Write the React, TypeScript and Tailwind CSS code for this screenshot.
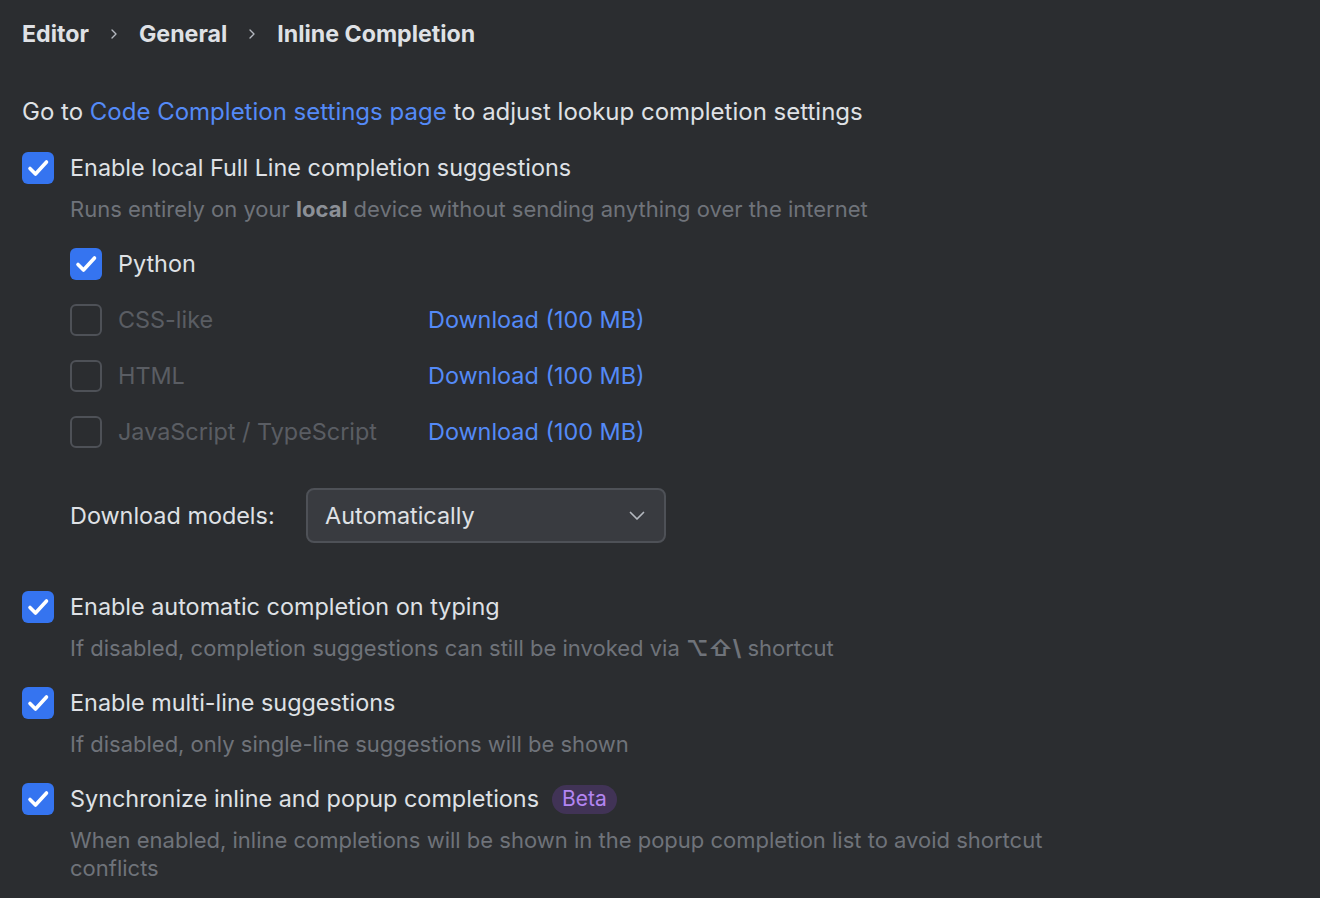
import { ChevronRight } from "lucide-react";

function Check({ on = true }: { on?: boolean }) {
  if (!on) {
    return (
      <div className="w-8 h-8 shrink-0 rounded-[6px] border-2 border-[#4e5157] bg-[#2b2d30]" />
    );
  }
  return (
    <div className="w-8 h-8 shrink-0 rounded-[6px] bg-[#3574f0]">
      <svg width="32" height="32" viewBox="0 0 32 32" fill="none">
        <path d="M8 16.5 L13.5 22 L24.5 10" stroke="white" strokeWidth="3.6" strokeLinecap="round" strokeLinejoin="round" />
      </svg>
    </div>
  );
}

function Option({
  label,
  desc,
  badge,
}: {
  label: string;
  desc: React.ReactNode;
  badge?: string;
}) {
  return (
    <div>
      <div className="flex items-center gap-4 h-8">
        <Check />
        <span className="text-[#dfe1e5]">{label}</span>
        {badge && (
          <span className="-ml-[3px] rounded-full bg-[#413356] text-[#b385f2] px-[10px] h-[29px] flex items-center text-[21px]">
            {badge}
          </span>
        )}
      </div>
      <div className="pl-12 mt-[11px] text-[22px] text-[#6f737a] leading-[28px] max-w-[1050px]">{desc}</div>
    </div>
  );
}

const LANGS = ["CSS-like", "HTML", "JavaScript / TypeScript"];

export default function App() {
  return (
    <div
      className="min-h-[898px] bg-[#2b2d30] text-[23.4px] text-[#dfe1e5] px-[22px] pt-[18px]"
      style={{ fontFamily: "Inter, 'Noto Sans', sans-serif" }}
    >
      {/* breadcrumb */}
      <div className="flex items-center h-8 font-bold text-[23.2px] text-[#dfe1e5]">
        <span>Editor</span>
        <ChevronRight className="mx-[17px] text-[#b4b8bf]" size={16} strokeWidth={2} />
        <span>General</span>
        <ChevronRight className="mx-[17px] text-[#b4b8bf]" size={16} strokeWidth={2} />
        <span>Inline Completion</span>
      </div>

      <div className="mt-[46px] leading-8 text-[24px]">
        Go to <span className="text-[#548af7]">Code Completion settings page</span> to adjust lookup
        completion settings
      </div>

      <div className="mt-6">
        <div className="flex items-center gap-4 h-8">
          <Check />
          <span>Enable local Full Line completion suggestions</span>
        </div>
        <div className="pl-12 mt-[11px] text-[22px] text-[#6f737a] leading-[28px]">
          Runs entirely on your <span className="font-bold text-[#8c9097]">local</span> device without
          sending anything over the internet
        </div>

        <div className="pl-12 mt-[25px] flex flex-col gap-6">
          <div className="flex items-center gap-4 h-8">
            <Check />
            <span>Python</span>
          </div>
          {LANGS.map((l) => (
            <div key={l} className="flex items-center h-8">
              <Check on={false} />
              <span className="ml-4 w-[310px] text-[#5a5d63]">{l}</span>
              <span className="text-[#548af7]">Download (100 MB)</span>
            </div>
          ))}
        </div>

        <div className="pl-12 mt-[40px] flex items-center">
          <span className="w-[236px]">Download models:</span>
          <div className="w-[360px] h-[55px] rounded-[8px] border-2 border-[#4e5157] bg-[#393b40] flex items-center justify-between pl-[17px] pr-[19px]">
            <span>Automatically</span>
            <svg width="16" height="10" viewBox="0 0 16 10" fill="none">
              <path d="M1.5 1.5 L8 8 L14.5 1.5" stroke="#b4b8bf" strokeWidth="1.7" strokeLinecap="round" strokeLinejoin="round" />
            </svg>
          </div>
        </div>
      </div>

      <div className="mt-[48px] flex flex-col gap-[25px]">
        <Option
          label="Enable automatic completion on typing"
          desc={
            <>
              If disabled, completion suggestions can still be invoked via{" "}
              <span className="font-bold">⌥⇧\</span> shortcut
            </>
          }
        />
        <Option
          label="Enable multi-line suggestions"
          desc="If disabled, only single-line suggestions will be shown"
        />
        <Option
          label="Synchronize inline and popup completions"
          badge="Beta"
          desc="When enabled, inline completions will be shown in the popup completion list to avoid shortcut conflicts"
        />
      </div>
    </div>
  );
}
